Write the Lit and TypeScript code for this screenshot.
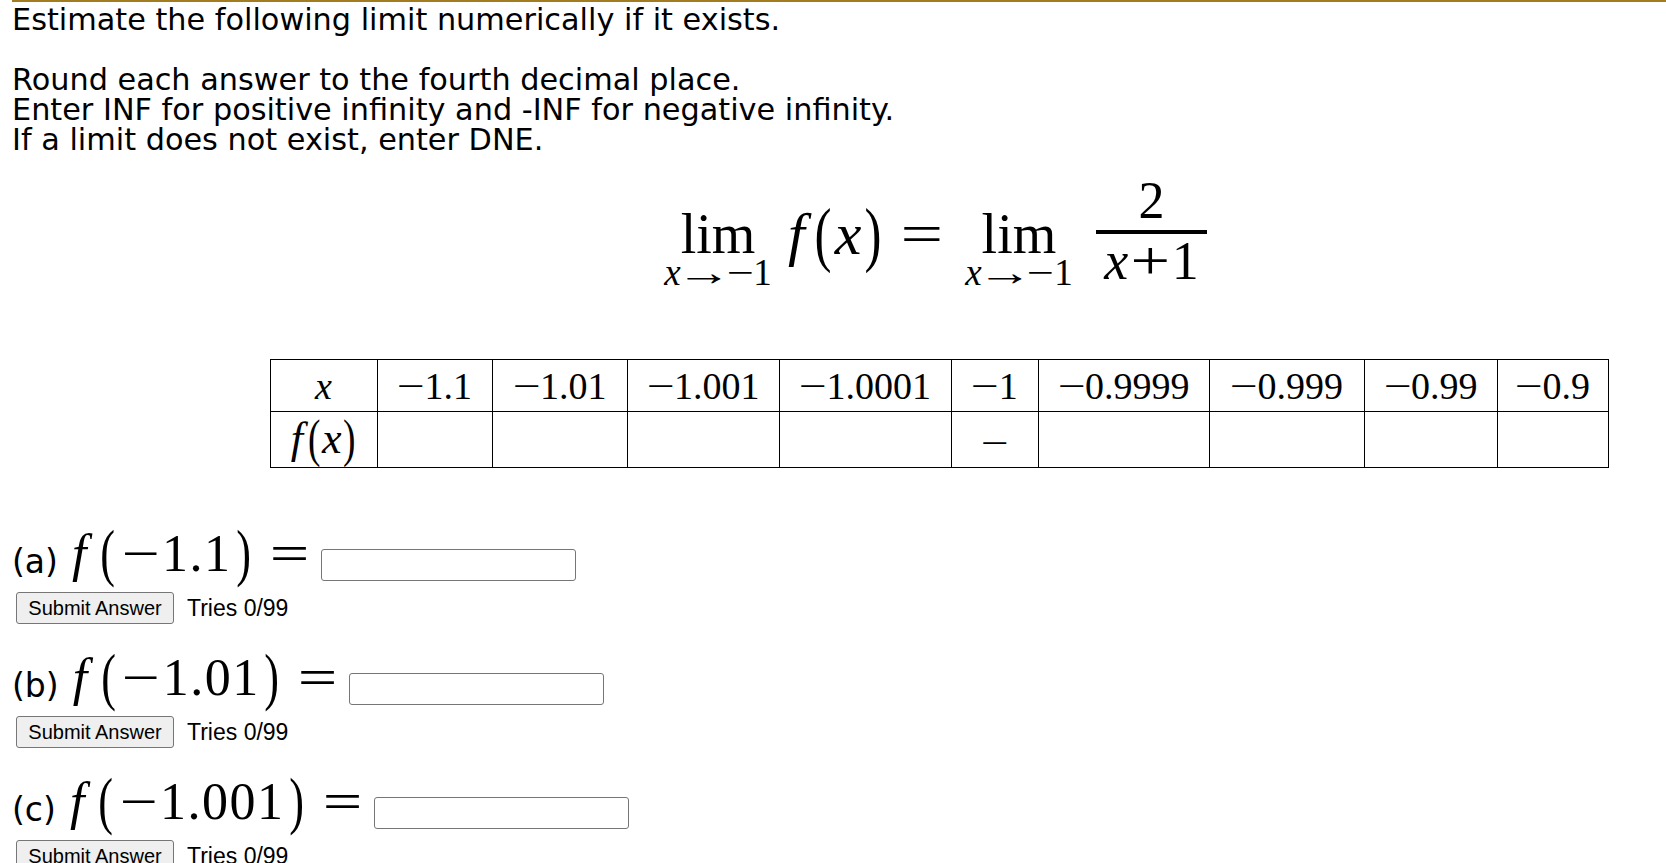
import { LitElement, html, css } from "lit";
import { customElement } from "lit/decorators.js";

const mn = html`<span class="mn">−</span>`;
const fx = html`<i class="ff">f</i><span class="p">(</span><i>x</i><span class="p">)</span>`;
const lim = html`<span class="lim"><span class="limw">lim</span><span class="sub"><i>x</i><span class="arr">→</span>${mn}1</span></span>`;
const heads = ["1.1", "1.01", "1.001", "1.0001", "1", "0.9999", "0.999", "0.99", "0.9"];
const widths = [107, 115, 135, 152, 172, 87, 171, 155, 133, 111];
const parts = [
  { l: "(a)", v: "1.1" },
  { l: "(b)", v: "1.01" },
  { l: "(c)", v: "1.001" },
];

@customElement("app-root")
export class AppRoot extends LitElement {
  static styles = css`
    :host { display: block; height: 863px; overflow: hidden; background: #fff; color: #000; box-sizing: border-box; font-family: "DejaVu Sans", Verdana, sans-serif; font-size: 30.3px; }
    .bar { height: 2px; margin-left: 12px; background: #a37c1f; }
    .intro { padding: 3px 0 0 12px; line-height: 30px; }
    .intro p { margin: 0; }
    .intro .gap { margin-top: 30px; }
    .math { font-family: "Liberation Serif", "Times New Roman", serif; }
    .mn { display: inline-block; transform: scaleX(1.3); margin: 0 0.08em; }
    .ff { margin-right: 0.1em; }
    .p { display: inline-block; transform: scale(0.85, 1.2); }
    .display { display: flex; justify-content: center; padding-left: 206px; margin-top: 23px; height: 181px; align-items: flex-start; }
    .eq { display: flex; align-items: flex-start; font-size: 56px; line-height: 1; padding-top: 28px; }
    .lim { display: inline-flex; flex-direction: column; align-items: center; width: 106px; }
    .limw { line-height: 56px; }
    .sub { font-size: 37px; line-height: 25px; white-space: nowrap; margin-top: -2px; }
    .arr { display: inline-block; transform: scaleX(1.5); margin: 0 0.12em; }
    .fx { margin-left: 17px; line-height: 56px; font-size: 60px; white-space: nowrap; }
    .fx .p { margin: 0 2px; }
    .equals { display: inline-block; transform: scaleX(1.35); margin: 0 28px 0 21px; line-height: 56px; }
    .frac { display: inline-flex; flex-direction: column; align-items: center; width: 111px; margin-left: 24px; margin-top: -27px; }
    .num { font-size: 52px; line-height: 44px; border-bottom: 4px solid #000; width: 100%; text-align: center; padding-bottom: 7px; }
    .den { font-size: 54px; line-height: 54px; white-space: nowrap; }
    .den .plus { display: inline-block; transform: scaleX(1.3); margin: 0 0.12em; }
    .tablewrap { padding-left: 212px; display: flex; justify-content: center; }
    table { border-collapse: collapse; table-layout: fixed; font-size: 38px; line-height: 40px; }
    td { border: 1px solid #000; padding: 0; text-align: center; height: 51px; }
    tr + tr td { height: 55px; }
    td .ff, td .p, td .p + i { font-size: 44px; }
    tr + tr td > .mn { position: relative; top: 3px; }
    .parts { margin-top: 57px; }
    .part { height: 124px; }
    .q { display: flex; align-items: baseline; height: 67px; padding-left: 12px; }
    .lab { margin-right: 14px; font-size: 33px; position: relative; top: 2px; }
    .expr { font-size: 52px; line-height: 58px; white-space: nowrap; display: flex; align-items: baseline; }
    .expr .ff { margin-right: 10px; }
    .expr .p { margin: 0 3px; }
    .expr .mn { margin: 0 7px 0 6px; }
    .digits { letter-spacing: 1.5px; }
    .eqs { display: inline-block; transform: scaleX(1.35); margin: 0 17px 0 20px; }
    input { width: 255px; height: 32px; box-sizing: border-box; border: 1px solid #767676; border-radius: 3px; padding: 0; font: 20px "Liberation Sans", Arial, sans-serif; background: #fff; }
    .actions { display: flex; align-items: center; padding-left: 16px; gap: 13px; font: 23px "Liberation Sans", Arial, sans-serif; height: 34px; margin-top: -1px; }
    button { width: 158px; height: 32px; box-sizing: border-box; border: 1px solid #767676; border-radius: 3px; background: #efefef; color: #000; padding: 0; font: 20px "Liberation Sans", Arial, sans-serif; }
  `;

  render() {
    return html`
      <div class="bar"></div>
      <div class="intro">
        <p>Estimate the following limit numerically if it exists.</p>
        <p class="gap">Round each answer to the fourth decimal place.</p>
        <p>Enter INF for positive infinity and -INF for negative infinity.</p>
        <p>If a limit does not exist, enter DNE.</p>
      </div>
      <div class="display math">
        <div class="eq">
          ${lim}<span class="fx">${fx}</span><span class="equals">=</span>${lim}
          <span class="frac"><span class="num">2</span><span class="den"><i>x</i><span class="plus">+</span>1</span></span>
        </div>
      </div>
      <div class="tablewrap math">
        <table>
          <colgroup>${widths.map((w) => html`<col style="width:${w}px" />`)}</colgroup>
          <tr><td><i>x</i></td>${heads.map((h) => html`<td>${mn}${h}</td>`)}</tr>
          <tr><td>${fx}</td>${heads.map((h) => html`<td>${h === "1" ? mn : ""}</td>`)}</tr>
        </table>
      </div>
      <div class="parts">
        ${parts.map((p) => html`
          <div class="part">
            <div class="q">
              <span class="lab">${p.l}</span>
              <span class="expr math"><i class="ff">f</i><span class="p">(</span>${mn}<span class="digits">${p.v}</span><span class="p">)</span><span class="eqs">=</span></span>
              <input type="text" aria-label="answer" />
            </div>
            <div class="actions"><button>Submit Answer</button><span>Tries 0/99</span></div>
          </div>`)}
      </div>
    `;
  }
}
